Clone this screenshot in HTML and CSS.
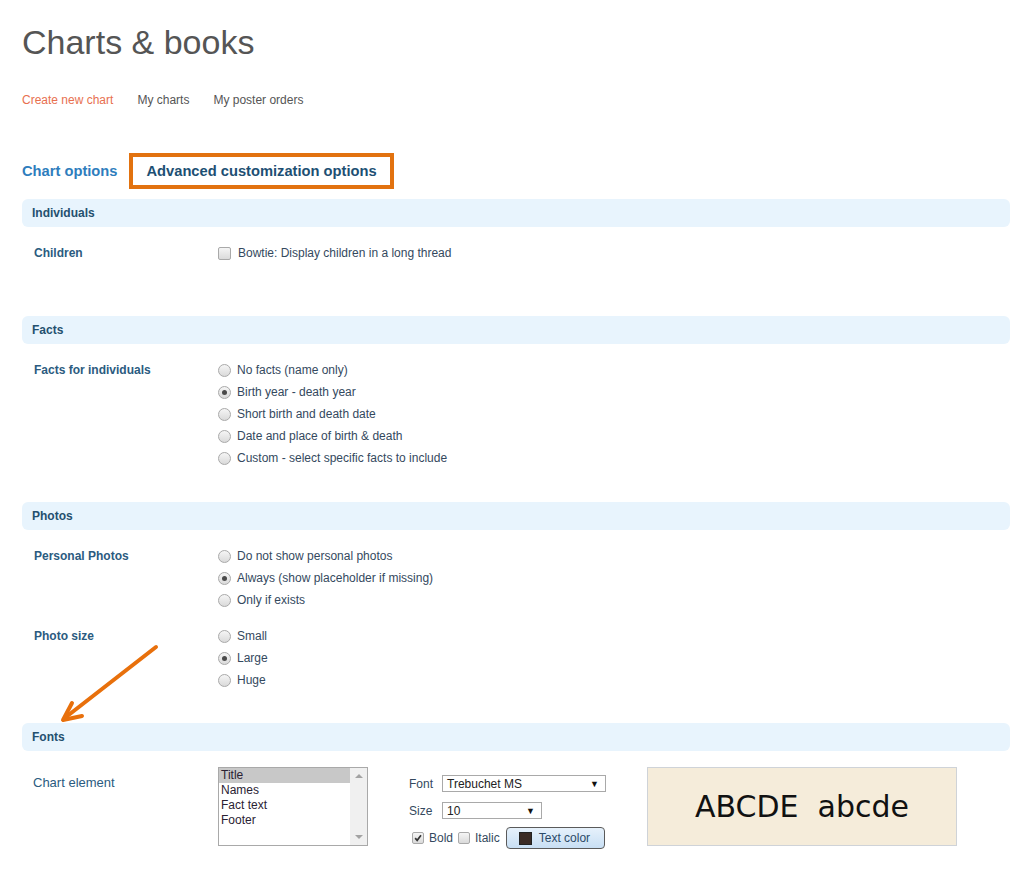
FILE: index.html
```html
<!DOCTYPE html>
<html>
<head>
<meta charset="utf-8">
<link rel="stylesheet" href="styles.css">
</head>
<body>
<div class="page">
  <h1 class="title">Charts &amp; books</h1>
  <nav class="nav">
    <a class="nav-link active">Create new chart</a>
    <a class="nav-link">My charts</a>
    <a class="nav-link">My poster orders</a>
  </nav>
  <div class="tabs">
    <div class="tab">Chart options</div>
    <div class="tab tab-current">Advanced customization options</div>
  </div>

  <section class="section sec-individuals">
    <div class="sec-head">Individuals</div>
    <div class="sec-body">
      <div class="group">
        <div class="label">Children</div>
        <div class="opts">
          <div class="opt"><span class="check"></span><span class="opt-text cb-text">Bowtie: Display children in a long thread</span></div>
        </div>
      </div>
    </div>
  </section>

  <section class="section">
    <div class="sec-head">Facts</div>
    <div class="sec-body">
      <div class="group">
        <div class="label">Facts for individuals</div>
        <div class="opts">
          <div class="opt"><span class="radio"></span><span class="opt-text">No facts (name only)</span></div>
          <div class="opt"><span class="radio on"></span><span class="opt-text">Birth year - death year</span></div>
          <div class="opt"><span class="radio"></span><span class="opt-text">Short birth and death date</span></div>
          <div class="opt"><span class="radio"></span><span class="opt-text">Date and place of birth &amp; death</span></div>
          <div class="opt"><span class="radio"></span><span class="opt-text">Custom - select specific facts to include</span></div>
        </div>
      </div>
    </div>
  </section>

  <section class="section sec-photos">
    <div class="sec-head">Photos</div>
    <div class="sec-body">
      <div class="group">
        <div class="label">Personal Photos</div>
        <div class="opts">
          <div class="opt"><span class="radio"></span><span class="opt-text">Do not show personal photos</span></div>
          <div class="opt"><span class="radio on"></span><span class="opt-text">Always (show placeholder if missing)</span></div>
          <div class="opt"><span class="radio"></span><span class="opt-text">Only if exists</span></div>
        </div>
      </div>
      <div class="group">
        <div class="label">Photo size</div>
        <div class="opts">
          <div class="opt"><span class="radio"></span><span class="opt-text">Small</span></div>
          <div class="opt"><span class="radio on"></span><span class="opt-text">Large</span></div>
          <div class="opt"><span class="radio"></span><span class="opt-text">Huge</span></div>
        </div>
      </div>
    </div>
  </section>

  <section class="section sec-fonts">
    <div class="sec-head">Fonts</div>
    <div class="fonts-body">
      <div class="label label-plain">Chart element</div>
      <div class="listbox">
        <div class="list-items">
          <div class="list-item selected">Title</div>
          <div class="list-item">Names</div>
          <div class="list-item">Fact text</div>
          <div class="list-item">Footer</div>
        </div>
        <div class="scrollbar">
          <span class="sb-up"></span>
          <span class="sb-down"></span>
        </div>
      </div>
      <div class="controls">
        <div class="ctrl-row">
          <span class="ctrl-label">Font</span>
          <div class="select select-font"><span>Trebuchet MS</span><span class="caret">&#9660;</span></div>
        </div>
        <div class="ctrl-row">
          <span class="ctrl-label">Size</span>
          <div class="select select-size"><span>10</span><span class="caret">&#9660;</span></div>
        </div>
        <div class="ctrl-row ctrl-style">
          <span class="check small checked"><svg viewBox="0 0 12 12" width="12" height="12"><path d="M2.6 6.2 L5 8.8 L9.6 2.8" fill="none" stroke="#333" stroke-width="2"/></svg></span>
          <span class="style-text">Bold</span>
          <span class="check small"></span>
          <span class="style-text">Italic</span>
          <div class="color-btn"><span class="swatch"></span><span>Text color</span></div>
        </div>
      </div>
      <div class="preview">ABCDE&nbsp; abcde</div>
    </div>
  </section>
</div>

<svg class="arrow" width="200" height="740" viewBox="0 0 200 740">
  <line x1="156" y1="647" x2="66" y2="717" stroke="#e8700c" stroke-width="4" stroke-linecap="round"/>
  <polyline points="72,703 63,720 82,716" fill="none" stroke="#e8700c" stroke-width="4" stroke-linecap="round" stroke-linejoin="round"/>
</svg>
</body>
</html>
```

FILE: styles.css
```css
html, body {
  margin: 0;
  padding: 0;
  background: #fff;
}
body {
  font-family: "Liberation Sans", Arial, sans-serif;
  position: relative;
}
.page {
  padding: 0 24px 0 22px;
}
.title {
  margin: 22px 0 0;
  font-size: 34px;
  line-height: 40px;
  font-weight: normal;
  color: #555;
}
.nav {
  margin-top: 30px;
  display: flex;
  gap: 24px;
  font-size: 12px;
  line-height: 16px;
}
.nav-link {
  color: #555;
}
.nav-link.active {
  color: #e8704f;
}
.tabs {
  margin-top: 45px;
  display: flex;
  align-items: center;
  gap: 12px;
  height: 36px;
}
.tab {
  font-size: 14.7px;
  font-weight: bold;
  color: #2e7dbd;
  line-height: 28px;
}
.tab-current {
  border: 4px solid #e2720f;
  padding: 0 13px;
  color: #1d4f73;
}
.tabs + .section {
  margin-top: 10px;
}
.sec-head {
  height: 28px;
  line-height: 28px;
  background: #e8f4fd;
  border-radius: 6px;
  padding-left: 10px;
  font-size: 12px;
  font-weight: bold;
  color: #24506f;
}
.sec-body {
  padding: 15px 0 33px;
}
.sec-individuals .sec-body {
  padding-bottom: 52px;
}
.sec-photos .sec-body {
  padding-bottom: 32px;
}
.group {
  display: flex;
}
.group + .group {
  margin-top: 14px;
}
.label {
  width: 184px;
  padding-left: 12px;
  flex-shrink: 0;
  font-size: 12px;
  font-weight: bold;
  line-height: 22px;
  color: #2b5b80;
}
.opts {
  display: flex;
  flex-direction: column;
}
.opt {
  display: flex;
  align-items: center;
  height: 22px;
}
.opt-text {
  font-size: 12px;
  color: #34495e;
  margin-left: 6px;
}
.opt-text.cb-text {
  margin-left: 7px;
}
.radio {
  width: 13px;
  height: 13px;
  box-sizing: border-box;
  border-radius: 50%;
  border: 1px solid #a9a9a9;
  background: linear-gradient(#f5f5f5, #dadada);
  position: relative;
}
.radio.on::after {
  content: "";
  position: absolute;
  left: 3px;
  top: 3px;
  width: 5px;
  height: 5px;
  border-radius: 50%;
  background: #4a4a4a;
}
.check {
  width: 13px;
  height: 13px;
  box-sizing: border-box;
  border: 1px solid #a9a9a9;
  border-radius: 2px;
  background: linear-gradient(#f5f5f5, #dadada);
  display: inline-flex;
  align-items: center;
  justify-content: center;
}
.check.small {
  width: 12px;
  height: 12px;
}
.check svg {
  display: block;
}

/* Fonts section */
.fonts-body {
  display: flex;
  align-items: flex-start;
  padding-top: 16px;
  padding-bottom: 20px;
}
.label-plain {
  font-weight: normal;
  font-size: 13px;
  line-height: 16px;
  padding-left: 11px;
  width: 185px;
  margin-top: 8px;
}
.listbox {
  width: 150px;
  height: 79px;
  box-sizing: border-box;
  border: 1px solid #a9a9a9;
  display: flex;
  flex-shrink: 0;
}
.list-items {
  flex: 1;
}
.list-item {
  font-size: 12px;
  line-height: 15px;
  color: #2a2233;
  padding-left: 2px;
}
.list-item.selected {
  background: #c8c8c8;
}
.scrollbar {
  width: 17px;
  background: #f0f0f0;
  display: flex;
  flex-direction: column;
  justify-content: space-between;
  align-items: center;
  padding: 6px 0 6px;
}
.sb-up, .sb-down {
  width: 0;
  height: 0;
  border-left: 4px solid transparent;
  border-right: 4px solid transparent;
}
.sb-up {
  border-bottom: 4px solid #a3a3a3;
}
.sb-down {
  border-top: 4px solid #a3a3a3;
}
.controls {
  margin-left: 41px;
  margin-top: 8px;
  width: 197px;
  flex-shrink: 0;
  display: flex;
  flex-direction: column;
  gap: 10px;
}
.ctrl-row {
  display: flex;
  align-items: center;
  height: 17px;
}
.ctrl-label {
  font-size: 12px;
  color: #34495e;
  width: 33px;
}
.select {
  height: 17px;
  box-sizing: border-box;
  border: 1px solid #a9a9a9;
  display: flex;
  align-items: center;
  justify-content: space-between;
  padding: 0 6px 0 4px;
  font-size: 12px;
  color: #222;
  background: #fff;
}
.select-font {
  width: 164px;
}
.select-size {
  width: 100px;
}
.caret {
  font-size: 9px;
  color: #111;
}
.ctrl-style {
  height: 22px;
  margin-top: -2px;
  padding-left: 3px;
}
.style-text {
  font-size: 12px;
  color: #34495e;
  margin-left: 5px;
  margin-right: 5px;
}
.color-btn {
  margin-left: 1px;
  width: 99px;
  height: 22px;
  box-sizing: border-box;
  border: 1px solid #5a5a5a;
  border-radius: 4px;
  background: linear-gradient(#e6f1fb, #c8dff4);
  display: flex;
  align-items: center;
  padding-left: 12px;
  font-size: 12px;
  color: #2b4a68;
}
.swatch {
  width: 13px;
  height: 13px;
  box-sizing: border-box;
  background: #3b2b25;
  border: 1px solid #222;
  margin-right: 7px;
}
.preview {
  margin-left: 41px;
  width: 310px;
  height: 79px;
  box-sizing: border-box;
  border: 1px solid #cfd3d8;
  background: #f5ecda;
  display: flex;
  align-items: center;
  justify-content: center;
  font-family: "DejaVu Sans", Verdana, sans-serif;
  font-size: 30px;
  color: #111;
  flex-shrink: 0;
}
.arrow {
  position: absolute;
  left: 0;
  top: 0;
  pointer-events: none;
}
```
